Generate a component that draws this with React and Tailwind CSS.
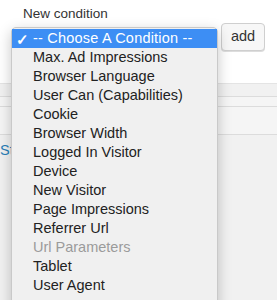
import React from "react";

const options = [
  { label: "Max. Ad Impressions" },
  { label: "Browser Language" },
  { label: "User Can (Capabilities)" },
  { label: "Cookie" },
  { label: "Browser Width" },
  { label: "Logged In Visitor" },
  { label: "Device" },
  { label: "New Visitor" },
  { label: "Page Impressions" },
  { label: "Referrer Url" },
  { label: "Url Parameters", disabled: true },
  { label: "Tablet" },
  { label: "User Agent" },
];

export default function App() {
  return (
    <div
      className="relative h-[300px] w-[277px] overflow-hidden bg-white text-[#222]"
      style={{ fontFamily: '"Liberation Sans", Arial, sans-serif' }}
    >
      {/* page behind the menu */}
      <div className="h-[83px] bg-white">
        <div className="pl-[23px] pt-[6px] text-[13.5px] leading-[16px] text-[#333]">New condition</div>
        <div className="flex pl-[221px] pt-[1px]">
          <button className="h-[28px] w-[44px] rounded-[4px] border border-[#cfcfcf] bg-[#f7f7f7] text-[14.5px] text-[#333] shadow-[0_1px_0_#ddd]">
            add
          </button>
        </div>
      </div>
      <div className="h-[217px] border-t border-[#e4e4e4] bg-[#f1f1f1]">
        <div className="h-[13px] border-b border-[#dcdcdc]" />
        <div className="h-[10px] border-b border-[#dcdcdc] bg-[#f5f5f5]" />
        <div className="h-[28px] border-b border-[#dcdcdc] bg-[#f5f5f5]" />
        <div className="pt-[7px] text-[14.5px] leading-[16px] text-[#2a7fb8]">Start</div>
      </div>

      {/* open select menu */}
      <div className="absolute left-[11px] top-[27px] w-[207px] rounded-[5px] border border-[#c9c9c9] bg-[#f0f0f0] pb-[20px] pt-[1px] shadow-[0_4px_14px_rgba(0,0,0,0.22)]">
        <div className="relative flex h-[19px] items-center bg-[#3d8ef4] pl-[21px] text-[14.5px] tracking-[0.2px] text-white">
          <span className="absolute left-[4px] top-[0px] text-[15px] font-bold">✓</span>
          -- Choose A Condition --
        </div>
        {options.map((opt) => (
          <div
            key={opt.label}
            className={
              opt.disabled
                ? "flex h-[19px] items-center pl-[21px] text-[14.5px] text-[#9b9b9b]"
                : "flex h-[19px] items-center pl-[21px] text-[14.5px] text-[#222]"
            }
          >
            {opt.label}
          </div>
        ))}
      </div>
    </div>
  );
}
